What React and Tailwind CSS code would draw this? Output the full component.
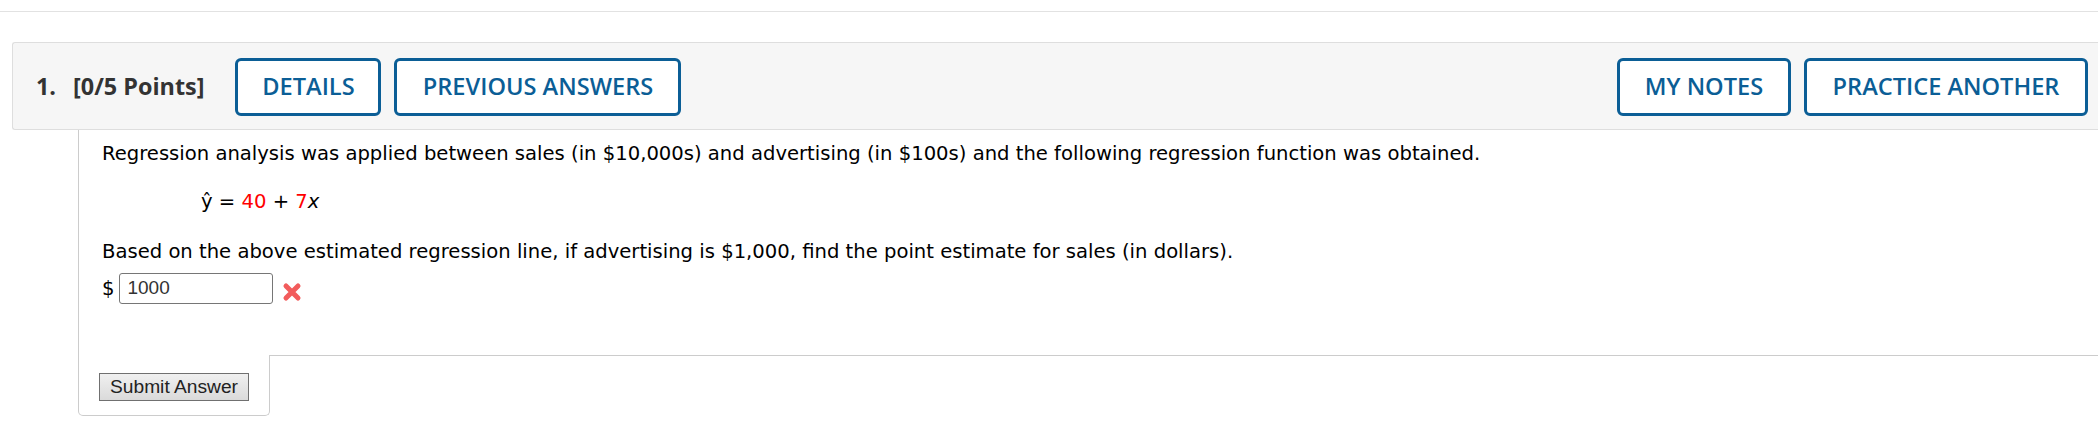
export default function App() {
  const btn =
    "h-[58px] border-[3px] border-[#0b5e96] rounded-[6px] bg-white text-[#0b5e96] text-[23.6px] font-semibold flex items-center justify-center shrink-0 font-['Open_Sans',sans-serif]";
  return (
    <div className="w-[2098px] h-[430px] bg-white overflow-hidden">
      <div className="h-[11px]" />
      <div className="border-t border-[#e2e2e2]" />
      <div className="h-[30px]" />
      <div className="ml-[12px] h-[88px] flex items-center pt-[2px] pl-[23px] pr-[10px] bg-[#f6f6f6] border border-r-0 border-[#dedede] rounded-l-[3px] font-['Open_Sans',sans-serif]">
        <div className="text-[23.4px] font-bold text-[#333333] flex shrink-0">
          <span>1.</span>
          <span className="ml-[17px]">[0/5 Points]</span>
        </div>
        <button className={`${btn} ml-[31px] w-[146px]`}>DETAILS</button>
        <button className={`${btn} ml-[13px] w-[287px]`}>PREVIOUS ANSWERS</button>
        <div className="flex-1" />
        <button className={`${btn} w-[174px]`}>MY NOTES</button>
        <button className={`${btn} ml-[13px] w-[284px]`}>PRACTICE ANOTHER</button>
      </div>

      <div className="ml-[78px] border-l border-[#cccccc] h-[225px] pl-[23px] font-['DejaVu_Sans',sans-serif] text-[19.6px] text-black">
        <p className="pt-[12px] leading-[24px]">
          Regression analysis was applied between sales (in $10,000s) and advertising (in $100s) and the following regression function was obtained.
        </p>
        <p className="mt-[24px] ml-[99px] leading-[24px]">
          ŷ = <span className="text-[#ff0000]">40</span> + <span className="text-[#ff0000]">7</span>
          <i>x</i>
        </p>
        <p className="mt-[26px] leading-[24px]">
          Based on the above estimated regression line, if advertising is $1,000, find the point estimate for sales (in dollars).
        </p>
        <div className="mt-[9px] flex items-center">
          <span>$</span>
          <div className="ml-[5px] w-[154px] h-[31px] border border-[#767676] rounded-[3px] flex items-center pl-[7px] font-['Liberation_Sans',sans-serif] text-[19px] text-[#333333]">
            1000
          </div>
          <svg className="ml-[9px] mt-[7px]" width="20" height="20" viewBox="0 0 20 20">
            <path d="M4 4 L16 16 M16 4 L4 16" stroke="#f25c5c" strokeWidth="5" strokeLinecap="round" />
          </svg>
        </div>
      </div>

      <div className="flex">
        <div className="ml-[78px] w-[192px] h-[61px] border-l border-r border-b border-[#cccccc] rounded-b-[5px] pl-[20px] pt-[18px] shrink-0">
          <button className="w-[150px] h-[28px] border border-[#707070] bg-linear-to-b from-[#f0f0f0] to-[#dadada] text-[#222222] font-['Liberation_Sans',sans-serif] text-[19.2px] leading-none flex items-center justify-center">
            Submit Answer
          </button>
        </div>
        <div className="flex-1 border-t border-[#cccccc]" />
      </div>
    </div>
  );
}
